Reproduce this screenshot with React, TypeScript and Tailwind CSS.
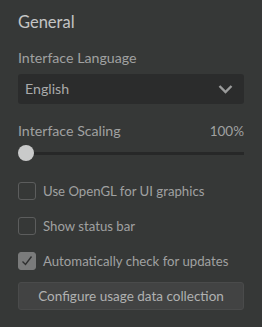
import { useState } from "react";

function Check({ checked, label }: { checked: boolean; label: string }) {
  return (
    <label className="flex items-center gap-[7px] h-[18px]">
      <span
        className={`w-[18px] h-[18px] rounded-[3px] border flex items-center justify-center ${
          checked ? "bg-[#7a7b7b] border-[#7a7b7b]" : "border-[#5c5d5d]"
        }`}
      >
        {checked && (
          <svg width="12" height="12" viewBox="0 0 12 12" fill="none">
            <path d="M1.5 6.5 L4.5 9.5 L10.5 1.5" stroke="#2f3030" strokeWidth="1.4" />
          </svg>
        )}
      </span>
      <span className="text-[13.2px] leading-[18px] text-[#a0a1a1]">{label}</span>
    </label>
  );
}

export default function App() {
  const [scale] = useState(100);

  return (
    <div
      className="w-[262px] h-[327px] bg-[#363837] px-[18px] pt-[10px]"
      style={{ fontFamily: "Lato, 'Noto Sans', sans-serif" }}
    >
      <h2 className="text-[16.5px] text-[#c4c5c5] leading-[24px]">General</h2>

      <p className="mt-[15px] text-[14.2px] text-[#a0a1a1] leading-[18px]">Interface Language</p>
      <div className="mt-[7px] h-[30px] rounded-[3px] bg-[#2b2c2c] flex items-center justify-between pl-[7px] pr-[11px]">
        <span className="text-[14.2px] text-[#a9aaaa]">English</span>
        <svg width="15" height="10" viewBox="0 0 15 10" fill="none">
          <path d="M1.5 2 L7.5 8 L13.5 2" stroke="#9a9b9b" strokeWidth="2.4" />
        </svg>
      </div>

      <div className="mt-[18px] flex justify-between items-center text-[14.2px] text-[#a0a1a1] leading-[18px]">
        <span>Interface Scaling</span>
        <span className="text-[13.5px]">{scale}%</span>
      </div>
      <div className="mt-[4px] flex items-center h-[18px]">
        <div className="w-[16px] h-[16px] rounded-full bg-[#c9caca]" />
        <div className="flex-1 h-[3px] bg-[#272828]" />
      </div>

      <div className="mt-[20px] flex flex-col gap-[17px]">
        <Check checked={false} label="Use OpenGL for UI graphics" />
        <Check checked={false} label="Show status bar" />
        <Check checked={true} label="Automatically check for updates" />
      </div>

      <button className="mt-[12px] w-full h-[28px] rounded-[3px] bg-[#424343] border border-[#4a4b4b] text-[13.5px] text-[#b0b1b1]">
        Configure usage data collection
      </button>
    </div>
  );
}
